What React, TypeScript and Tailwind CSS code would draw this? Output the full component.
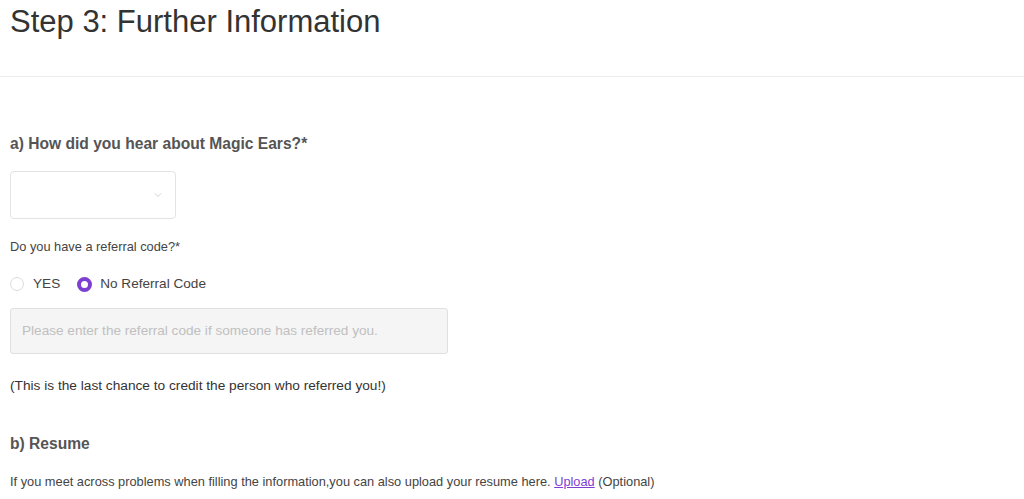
import { ChevronDown } from 'lucide-react'

export default function App() {
  return (
    <div className="min-h-[499px] w-[1024px] bg-white font-['Liberation_Sans',Arial,sans-serif] text-[#333]">
      <div className="h-[77px] border-b border-[#ececec] px-[10px] pt-[2px]">
        <h1 className="text-[31px] leading-[40px] text-[#333]">Step 3: Further Information</h1>
      </div>

      <div className="px-[10px] pt-[57px]">
        <h2 className="text-[15.6px] font-bold leading-[20px] text-[#555]">
          a) How did you hear about Magic Ears?*
        </h2>

        <div className="mt-[17px] flex h-[48px] w-[166px] items-center justify-end rounded-[4px] border border-[#e3e3e3] pr-[11px]">
          <ChevronDown className="h-[12px] w-[12px] text-[#c4c4c4]" strokeWidth={1.5} />
        </div>

        <p className="mt-[19px] text-[12.8px] leading-[18px] text-[#444]">Do you have a referral code?*</p>

        <div className="mt-[18px] flex items-center text-[13.6px] text-[#444]">
          <label className="flex items-center">
            <span className="h-[14px] w-[14px] rounded-full border border-[#dcdcdc] bg-white" />
            <span className="ml-[9px]">YES</span>
          </label>
          <label className="ml-[17px] flex items-center">
            <span className="h-[15px] w-[15px] rounded-full border-[4px] border-[#7d3fd1] bg-white" />
            <span className="ml-[8px]">No Referral Code</span>
          </label>
        </div>

        <div className="mt-[14px] flex h-[46px] w-[438px] items-center rounded-[3px] border border-[#e0e0e0] bg-[#f5f5f5] px-[11px] text-[13.6px] text-[#c0c0c0]">
          Please enter the referral code if someone has referred you.
        </div>

        <p className="mt-[23px] text-[13.7px] leading-[18px] text-[#333]">
          (This is the last chance to credit the person who referred you!)
        </p>

        <h2 className="mt-[39px] text-[15.6px] font-bold leading-[20px] text-[#555]">b) Resume</h2>

        <p className="mt-[20px] text-[12.8px] leading-[16px] text-[#444]">
          If you meet across problems when filling the information,you can also upload your resume here.{' '}
          <a className="text-[#7d3fd1] underline" href="#">Upload</a>{' '}
          (Optional)
        </p>
      </div>
    </div>
  )
}
